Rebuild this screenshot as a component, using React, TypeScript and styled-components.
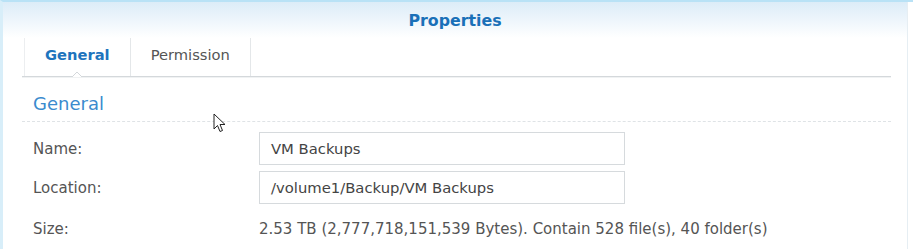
import React from "react";
import styled, { createGlobalStyle } from "styled-components";

const Global = createGlobalStyle`
  html, body { margin: 0; padding: 0; background: #ffffff; }
  body { font-family: "DejaVu Sans", Verdana, sans-serif; }
`;

const Window = styled.div`
  position: relative;
  width: 913px;
  height: 249px;
  box-sizing: border-box;
  border-top: 2px solid #b9e2f6;
  border-left: 3px solid #d8eef9;
  overflow: hidden;
  display: flex;
  flex-direction: column;
  background: #fff;
`;

const Inner = styled.div`
  width: 904px;
  border-right: 1px solid #e6eef3;
  display: flex;
  flex-direction: column;
  flex: 1;
`;

const Header = styled.div`
  height: 36px;
  display: flex;
  align-items: center;
  justify-content: center;
  background: linear-gradient(#dcecf8, #ffffff);
  color: #1a70b8;
  font-weight: bold;
  font-size: 15.8px;
`;

const TabBar = styled.div`
  margin: 0 16px 0 19px;
  height: 38px;
  display: flex;
  border-bottom: 1px solid #d4d8db;
  box-shadow: 0 1px 0 #f0f2f3;
`;

const Tab = styled.div<{ $active?: boolean }>`
  position: relative;
  padding: 0 20px 6px;
  display: flex;
  align-items: center;
  font-size: 14.7px;
  font-weight: ${(p) => (p.$active ? "bold" : "normal")};
  color: ${(p) => (p.$active ? "#1e74bd" : "#555")};
  border-right: 1px solid #e4e7e9;
  &:first-child { border-left: 1px solid #eceef0; margin-left: 2px; }
`;

const Notch = styled.span`
  position: absolute;
  left: 50%;
  bottom: -1px;
  width: 10px;
  height: 6px;
  transform: translateX(-50%);
  svg { display: block; }
`;

const Content = styled.div`
  margin: 0 16px 0 19px;
  display: flex;
  flex-direction: column;
`;

const SectionTitle = styled.div`
  padding: 16px 0 7px 11px;
  font-size: 18px;
  color: #3b8bce;
  border-bottom: 1px dashed #dfe3e6;
`;

const Form = styled.div`
  display: grid;
  grid-template-columns: 226px 366px;
  row-gap: 6px;
  padding-top: 10px;
  padding-left: 11px;
  align-items: center;
`;

const Label = styled.div`
  font-size: 15px;
  color: #555;
`;

const Input = styled.div`
  box-sizing: border-box;
  height: 33px;
  border: 1px solid #d6dadd;
  padding: 0 11px;
  display: flex;
  align-items: center;
  font-size: 14.8px;
  color: #444;
`;

const Value = styled.div`
  font-size: 15px;
  color: #555;
  white-space: nowrap;
  padding-top: 10px;
`;

const SizeLabel = styled(Label)`
  padding-top: 10px;
`;

const Cursor = styled.div`
  position: absolute;
  left: 210px;
  top: 111px;
  svg { display: block; }
`;

export default function App() {
  return (
    <>
      <Global />
      <Window>
        <Inner>
          <Header>Properties</Header>
          <TabBar>
            <Tab $active>
              General
              <Notch>
                <svg width="10" height="6" viewBox="0 0 10 6">
                  <path d="M0 6 L5 1 L10 6" fill="#fff" stroke="#d4d8db" strokeWidth="1" />
                </svg>
              </Notch>
            </Tab>
            <Tab>Permission</Tab>
          </TabBar>
          <Content>
            <SectionTitle>General</SectionTitle>
            <Form>
              <Label>Name:</Label>
              <Input>VM Backups</Input>
              <Label>Location:</Label>
              <Input>/volume1/Backup/VM Backups</Input>
              <SizeLabel>Size:</SizeLabel>
              <Value>2.53 TB (2,777,718,151,539 Bytes). Contain 528 file(s), 40 folder(s)</Value>
            </Form>
          </Content>
        </Inner>
        <Cursor>
          <svg width="14" height="22" viewBox="0 0 14 22">
            <path d="M1 1 L1 16 L4.5 12.5 L7 18.5 L9.5 17.5 L7 11.5 L12 11.5 Z" fill="#fff" stroke="#222" strokeWidth="1" strokeLinejoin="round" />
          </svg>
        </Cursor>
      </Window>
    </>
  );
}
